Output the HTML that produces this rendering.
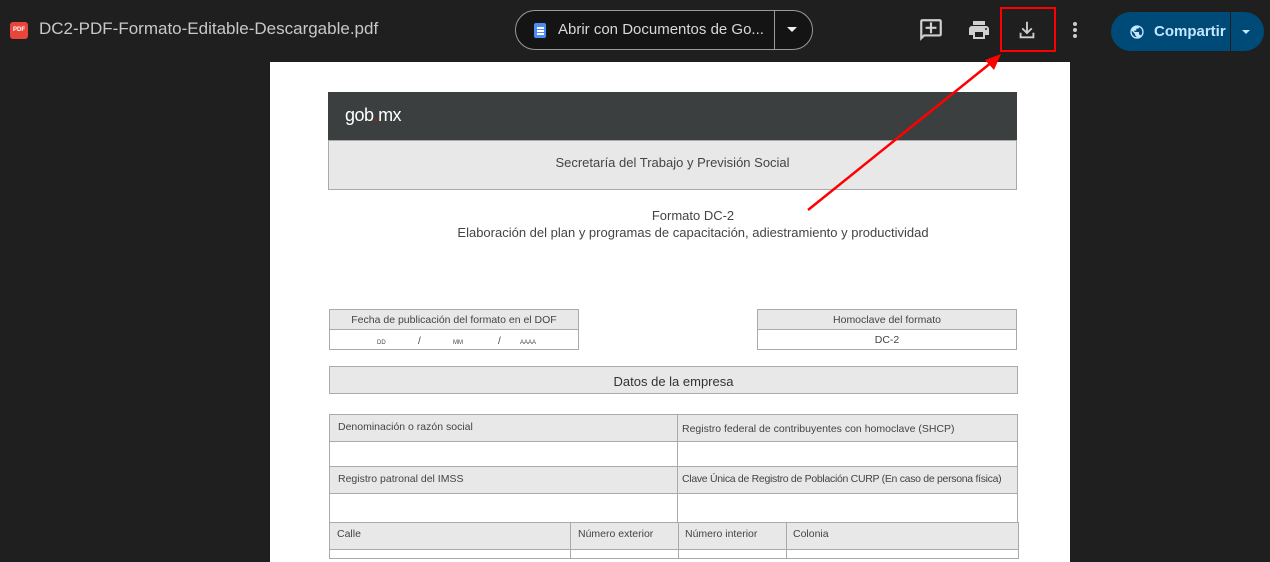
<!DOCTYPE html>
<html><head><meta charset="utf-8"><style>
*{margin:0;padding:0;box-sizing:border-box}
body{width:1270px;height:553px;background:#1f1f1f;position:relative;overflow:hidden;font-family:"Liberation Sans",sans-serif}
.a{position:absolute}
.page{left:270px;top:62px;width:800px;height:500px;background:#fff}
.g{background:#e7e8e7;border:1px solid #aaa}
.w{background:#fff;border:1px solid #aaa}
.t{font-size:10.5px;color:#444;white-space:nowrap}
</style></head><body>
<div class="a" style="left:10px;top:22px;width:18px;height:17px;background:#e8463b;border-radius:3px;color:#fff;font-size:6px;font-weight:bold;text-align:center;line-height:17px">PDF</div>
<div class="a" style="left:39px;top:19px;font-size:17px;color:#c8c8c8">DC2-PDF-Formato-Editable-Descargable.pdf</div>
<div class="a" style="left:515px;top:10px;width:298px;height:40px;border:1px solid #9a9a9a;border-radius:20px;background:#141414"></div>
<div class="a" style="left:534px;top:23px;width:12px;height:15px;background:#4f8bf5;border-radius:2px"></div>
<div class="a" style="left:537px;top:27px;width:7px;height:1.5px;background:#fff;box-shadow:0 3px 0 #fff,0 6px 0 #fff"></div>
<div class="a" style="left:558px;top:21px;font-size:15px;color:#d8d8d8">Abrir con Documentos de Go...</div>
<div class="a" style="left:774px;top:11px;width:1px;height:38px;background:#9a9a9a"></div>
<div class="a" style="left:787px;top:27px;border-left:5px solid transparent;border-right:5px solid transparent;border-top:5px solid #eee"></div>
<svg class="a" style="left:918px;top:17px" width="26" height="26" viewBox="0 0 24 24" fill="#d0d0d0"><path d="M20 2H4c-1.1 0-2 .9-2 2v18l4-4h14c1.1 0 2-.9 2-2V4c0-1.1-.9-2-2-2zm0 14H5.2L4 17.2V4h16v12zM11 5h2v4h4v2h-4v4h-2v-4H7V9h4z"/></svg>
<svg class="a" style="left:967px;top:18px" width="24" height="24" viewBox="0 0 24 24" fill="#d0d0d0"><path d="M19 8H5c-1.66 0-3 1.34-3 3v6h4v4h12v-4h4v-6c0-1.66-1.34-3-3-3zm-3 11H8v-5h8v5zm3-7c-.55 0-1-.45-1-1s.45-1 1-1 1 .45 1 1-.45 1-1 1zm-1-9H6v4h12V3z"/></svg>
<svg class="a" style="left:1016px;top:19px" width="22" height="22" viewBox="0 0 24 24" fill="#d0d0d0"><path d="M11 3h2v10l3.5-3.5 1.4 1.4L12 16.8 6.1 10.9l1.4-1.4L11 13zM4 15h2v4h12v-4h2v6H4z"/></svg>
<div class="a" style="left:1000px;top:7px;width:56px;height:45px;border:2.5px solid #f00"></div>
<div class="a" style="left:1073px;top:22px;width:4px;height:4px;border-radius:2px;background:#ccc;box-shadow:0 6px 0 #ccc,0 12px 0 #ccc"></div>
<div class="a" style="left:1111px;top:12px;width:153px;height:39px;border-radius:20px;background:#004a77"></div>
<div class="a" style="left:1230px;top:12px;width:1px;height:39px;background:#1f1f1f"></div>
<svg class="a" style="left:1129px;top:24px" width="16" height="16" viewBox="0 0 24 24" fill="#c2e7ff"><path d="M12 2a10 10 0 100 20 10 10 0 000-20zm-1 17.9A8 8 0 014 12c0-.6.1-1.2.2-1.8L9 15v1c0 1.1.9 2 2 2v1.9zm6.9-2.5c-.3-.8-1-1.4-1.9-1.4h-1v-3c0-.6-.4-1-1-1H8v-2h2c.6 0 1-.4 1-1V7h2c1.1 0 2-.9 2-2v-.4a8 8 0 012.9 12.8z"/></svg>
<div class="a" style="left:1154px;top:23px;font-size:15px;font-weight:bold;color:#c2e7ff">Compartir</div>
<div class="a" style="left:1242px;top:30px;border-left:4px solid transparent;border-right:4px solid transparent;border-top:4px solid #c2e7ff"></div>

<div class="a page"></div>
<div class="a" style="left:328px;top:92px;width:689px;height:48px;background:#3b3f40"></div>
<div class="a" style="left:345px;top:105px;font-size:18px;color:#fff;letter-spacing:-0.5px">gob<span style="color:#d00">.</span>mx</div>
<div class="a g" style="left:328px;top:140px;width:689px;height:50px"></div>
<div class="a t" style="left:328px;top:155px;width:689px;text-align:center;font-size:13px">Secretaría del Trabajo y Previsión Social</div>
<div class="a t" style="left:328px;top:207px;width:730px;text-align:center;font-size:13px;line-height:17px">Formato DC-2<br>Elaboración del plan y programas de capacitación, adiestramiento y productividad</div>

<div class="a g" style="left:329px;top:309px;width:250px;height:21px"></div>
<div class="a w" style="left:329px;top:329px;width:250px;height:21px"></div>
<div class="a t" style="left:329px;top:314px;width:250px;text-align:center">Fecha de publicación del formato en el DOF</div>
<div class="a t" style="left:377px;top:340px;font-size:6px">DD</div><div class="a t" style="left:418px;top:336px;font-size:10px">/</div>
<div class="a t" style="left:453px;top:340px;font-size:6px">MM</div><div class="a t" style="left:498px;top:336px;font-size:10px">/</div>
<div class="a t" style="left:520px;top:340px;font-size:6px">AAAA</div>

<div class="a g" style="left:757px;top:309px;width:260px;height:21px"></div>
<div class="a w" style="left:757px;top:329px;width:260px;height:21px"></div>
<div class="a t" style="left:757px;top:314px;width:260px;text-align:center">Homoclave del formato</div>
<div class="a t" style="left:757px;top:334px;width:260px;text-align:center">DC-2</div>

<div class="a g" style="left:329px;top:366px;width:689px;height:28px"></div>
<div class="a t" style="left:329px;top:374px;width:689px;text-align:center;font-size:13px;color:#333">Datos de la empresa</div>

<div class="a g" style="left:329px;top:414px;width:349px;height:28px"></div>
<div class="a g" style="left:677px;top:414px;width:341px;height:28px"></div>
<div class="a w" style="left:329px;top:441px;width:349px;height:26px"></div>
<div class="a w" style="left:677px;top:441px;width:341px;height:26px"></div>
<div class="a g" style="left:329px;top:466px;width:349px;height:28px"></div>
<div class="a g" style="left:677px;top:466px;width:341px;height:28px"></div>
<div class="a w" style="left:329px;top:493px;width:349px;height:30px"></div>
<div class="a w" style="left:677px;top:493px;width:341px;height:30px"></div>
<div class="a t" style="left:338px;top:421px">Denominación o razón social</div>
<div class="a t" style="left:682px;top:423px">Registro federal de contribuyentes con homoclave (SHCP)</div>
<div class="a t" style="left:338px;top:473px">Registro patronal del IMSS</div>
<div class="a t" style="left:682px;top:473px;letter-spacing:-0.3px">Clave Única de Registro de Población CURP (En caso de persona física)</div>

<div class="a g" style="left:329px;top:522px;width:242px;height:28px"></div>
<div class="a g" style="left:570px;top:522px;width:109px;height:28px"></div>
<div class="a g" style="left:678px;top:522px;width:109px;height:28px"></div>
<div class="a g" style="left:786px;top:522px;width:233px;height:28px"></div>
<div class="a w" style="left:329px;top:549px;width:242px;height:10px"></div>
<div class="a w" style="left:570px;top:549px;width:109px;height:10px"></div>
<div class="a w" style="left:678px;top:549px;width:109px;height:10px"></div>
<div class="a w" style="left:786px;top:549px;width:233px;height:10px"></div>
<div class="a t" style="left:337px;top:528px">Calle</div>
<div class="a t" style="left:578px;top:528px">Número exterior</div>
<div class="a t" style="left:685px;top:528px">Número interior</div>
<div class="a t" style="left:793px;top:528px">Colonia</div>

<svg class="a" style="left:0;top:0" width="1270" height="553"><line x1="808" y1="210" x2="992" y2="62" stroke="#f00" stroke-width="2.5"/><polygon points="1001,54 985,60 994,70" fill="#f00"/></svg>
</body></html>
